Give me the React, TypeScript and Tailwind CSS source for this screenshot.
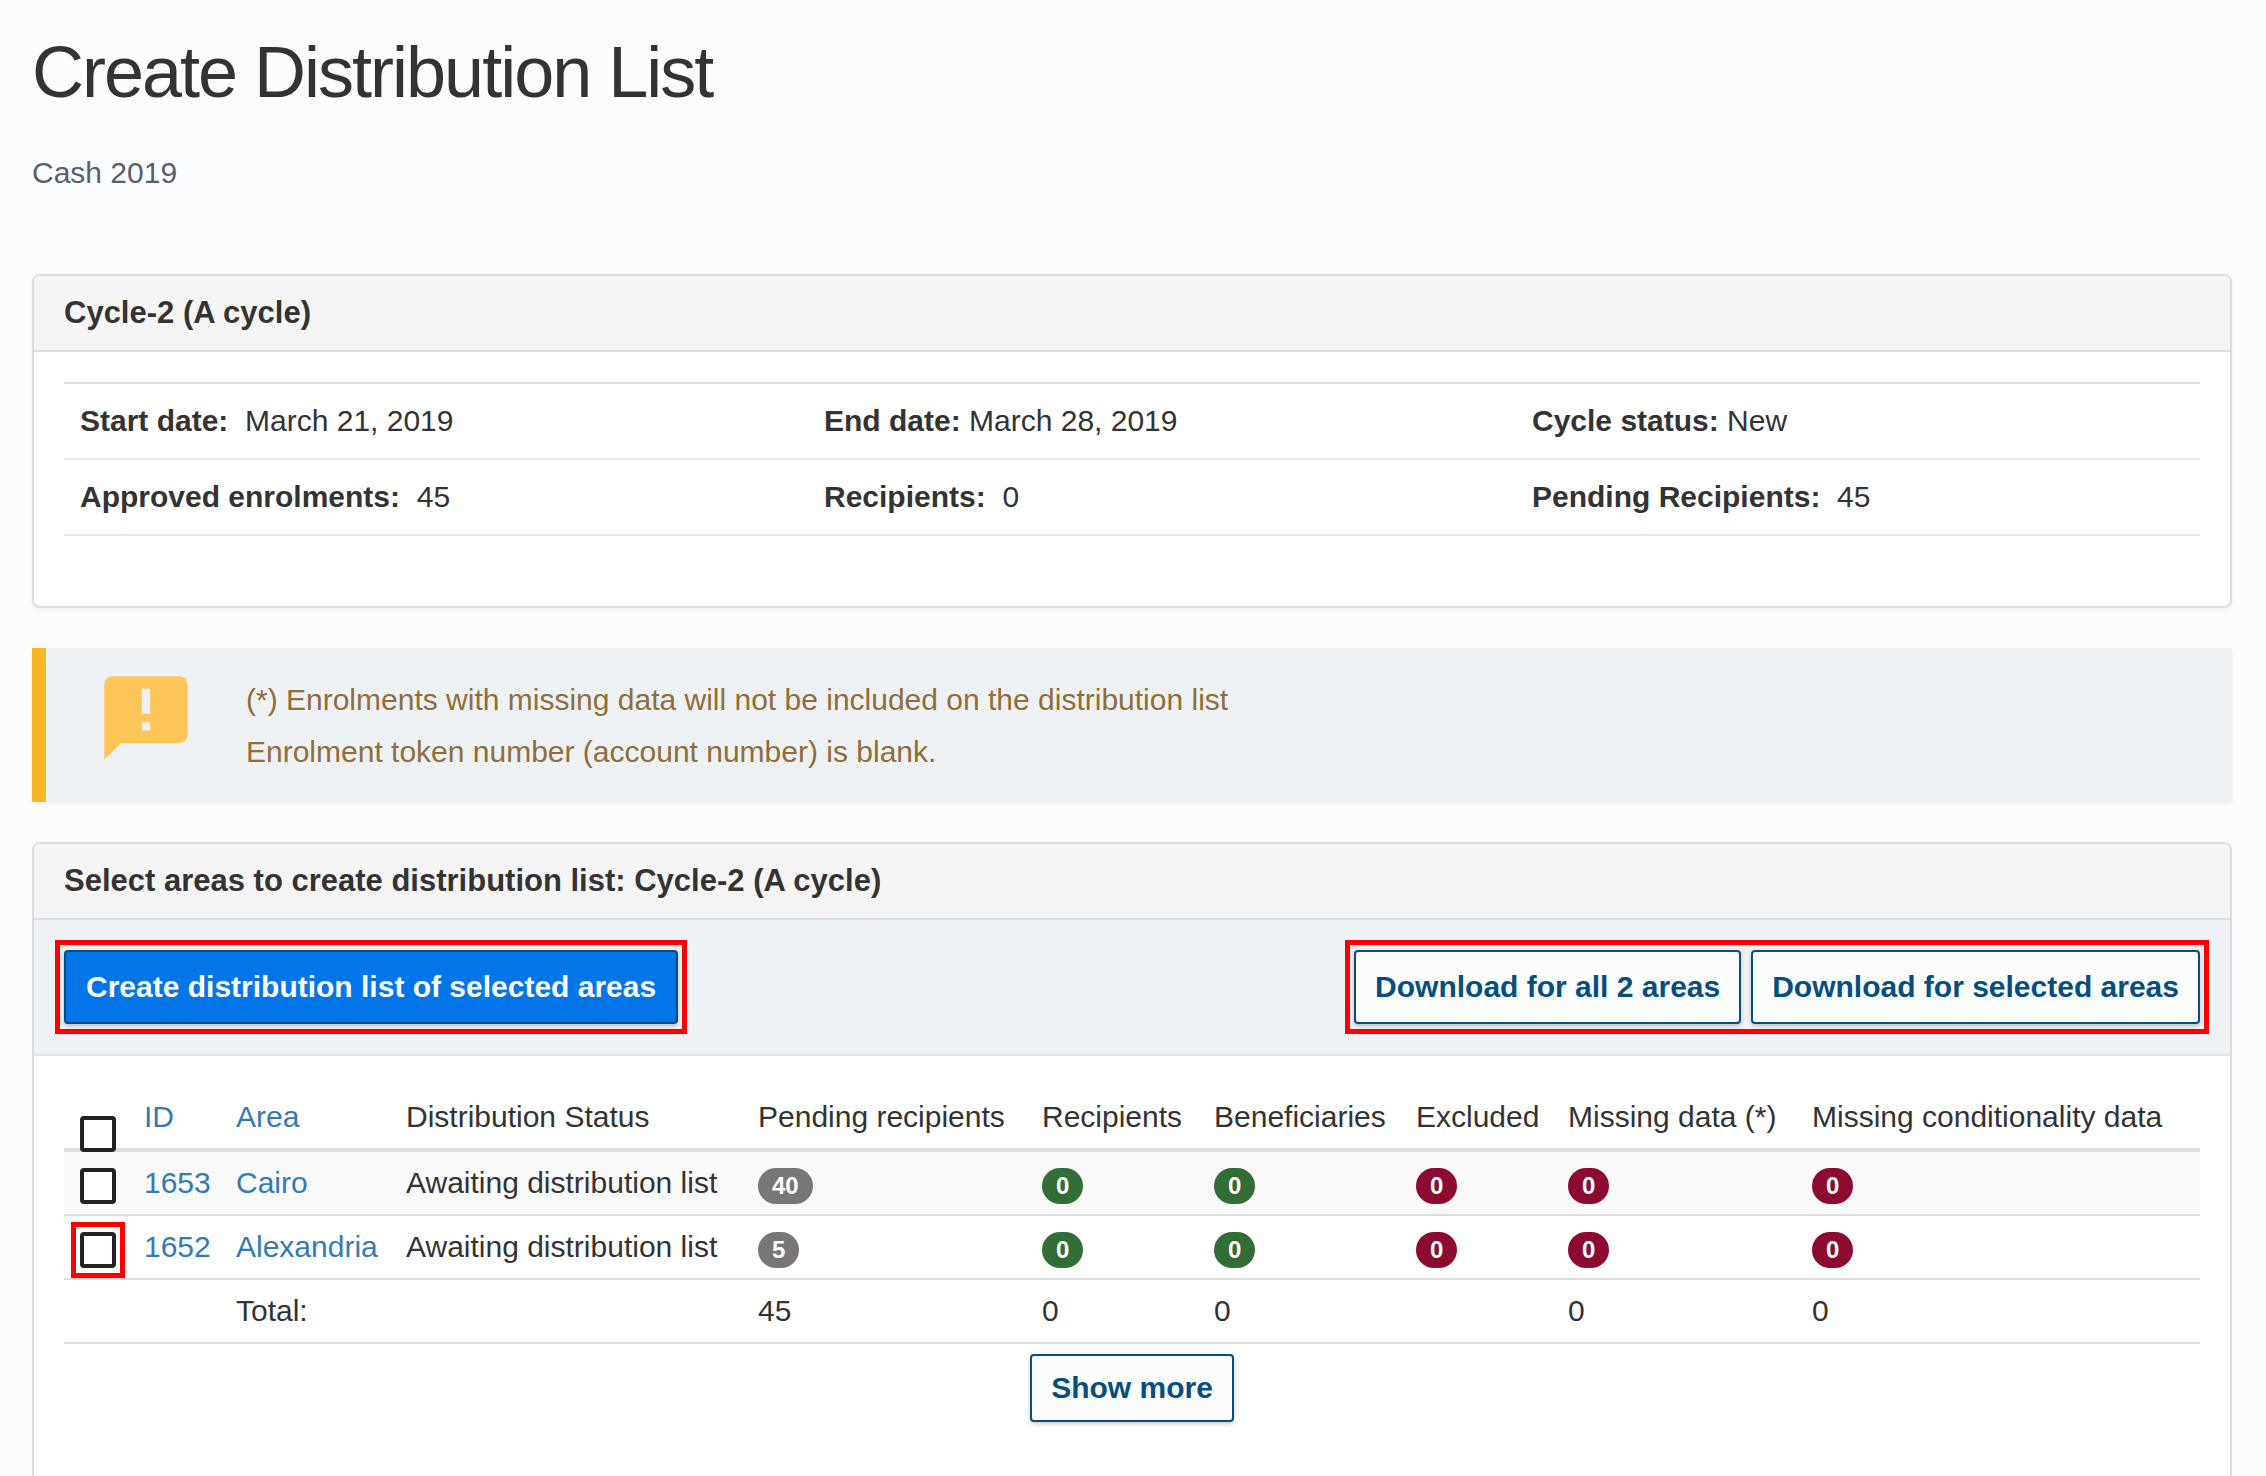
import { useState } from 'react';
import type { ReactNode } from 'react';

interface AreaRow {
  id: number;
  name: string;
  status: string;
  pending: number;
  recipients: number;
  beneficiaries: number;
  excluded: number;
  missingData: number;
  missingConditionality: number;
  marked?: boolean;
}

const areas: AreaRow[] = [
  {
    id: 1653,
    name: 'Cairo',
    status: 'Awaiting distribution list',
    pending: 40,
    recipients: 0,
    beneficiaries: 0,
    excluded: 0,
    missingData: 0,
    missingConditionality: 0,
  },
  {
    id: 1652,
    name: 'Alexandria',
    status: 'Awaiting distribution list',
    pending: 5,
    recipients: 0,
    beneficiaries: 0,
    excluded: 0,
    missingData: 0,
    missingConditionality: 0,
    marked: true,
  },
];

const badgeColors = {
  gray: 'bg-[#777777]',
  green: 'bg-[#336d36]',
  red: 'bg-[#8c0a2f]',
};

function Badge({ color, children }: { color: keyof typeof badgeColors; children: ReactNode }) {
  return (
    <span className={`mt-1.5 block w-fit rounded-full px-3.5 text-2xl leading-9 font-bold text-white ${badgeColors[color]}`}>
      {children}
    </span>
  );
}

function Checkbox({ label, checked, onChange }: { label: string; checked: boolean; onChange: () => void }) {
  return (
    <input
      type="checkbox"
      aria-label={label}
      checked={checked}
      onChange={onChange}
      className="block size-9 cursor-pointer appearance-none rounded-sm border-4 border-[#222222] bg-white checked:bg-[#0275e8]"
    />
  );
}

// Red frame that points at the controls the user has to click
function Highlight() {
  return <span className="pointer-events-none absolute -inset-x-[9px] -inset-y-[10px] border-5 border-[#ff0000]" />;
}

function Button({ children, primary, className = '' }: { children: ReactNode; primary?: boolean; className?: string }) {
  const colors = primary ? 'bg-[#0275e8] px-5 text-white' : 'bg-[#fbfdfd] px-[19px] text-[#074e80]';
  return (
    <button
      type="button"
      className={`cursor-pointer rounded-sm border-2 border-[#074e80] font-bold whitespace-nowrap shadow-[0_2px_4px_rgba(0,0,0,0.2)] ${colors} ${className}`}
    >
      {children}
    </button>
  );
}

function PanelHeader({ children }: { children: ReactNode }) {
  return (
    <h2 className="rounded-t-md border-b-2 border-[#dddddd] bg-[#f5f5f5] px-[30px] py-4 text-[31px] leading-[42px] font-bold">
      {children}
    </h2>
  );
}

export default function App() {
  const [selected, setSelected] = useState<number[]>([]);
  const allSelected = selected.length === areas.length;

  const toggle = (id: number) => {
    setSelected((prev) => (prev.includes(id) ? prev.filter((x) => x !== id) : [...prev, id]));
  };

  return (
    <div className="flex min-h-screen flex-col bg-[#fbfcfe] pt-8 pr-[34px] pl-8 font-['Liberation_Sans',Arial,sans-serif] text-[30px] leading-[42px] text-[#333333]">
      <h1 className="text-7xl leading-[80px] tracking-[-2px]">Create Distribution List</h1>
      <p className="mt-10 text-[#586069]">Cash 2019</p>

      {/* Cycle summary */}
      <section className="mt-20 rounded-lg border-2 border-[#dddddd] bg-white shadow-[0_2px_4px_rgba(0,0,0,0.05)]">
        <PanelHeader>Cycle-2 (A cycle)</PanelHeader>
        <div className="px-[30px] pt-[30px] pb-[70px]">
          <table className="w-full table-fixed border-separate border-spacing-0 border-t-2 border-[#dddddd]">
            <colgroup>
              <col className="w-[744px]" />
              <col className="w-[708px]" />
              <col />
            </colgroup>
            <tbody className="[&_td]:border-b-2 [&_td]:border-[#e7e7e7] [&_td]:px-4 [&_td]:py-4">
              <tr>
                <td><b>Start date:</b>&nbsp; March 21, 2019</td>
                <td><b>End date:</b> March 28, 2019</td>
                <td><b>Cycle status:</b> New</td>
              </tr>
              <tr>
                <td><b>Approved enrolments:</b>&nbsp; 45</td>
                <td><b>Recipients:</b>&nbsp; 0</td>
                <td><b>Pending Recipients:</b>&nbsp; 45</td>
              </tr>
            </tbody>
          </table>
        </div>
      </section>

      {/* Missing data warning */}
      <div
        role="alert"
        className="mt-10 flex border-l-14 border-[#f8b826] bg-[#eef2f5] pt-5 pb-6 pl-[50px] text-[#8f6e38] shadow-[0_2px_4px_rgba(0,0,0,0.06)]"
      >
        <svg viewBox="0 0 24 24" className="size-[100px] shrink-0" fill="#ffc559" aria-hidden="true">
          <path d="M13 11h-2V5h2m0 10h-2v-2h2m7-11H4a2 2 0 0 0-2 2v18l4-4h14a2 2 0 0 0 2-2V4a2 2 0 0 0-2-2z" />
        </svg>
        <div className="pt-1.5 pl-[50px] leading-[52px]">
          <p>(*) Enrolments with missing data will not be included on the distribution list</p>
          <p>Enrolment token number (account number) is blank.</p>
        </div>
      </div>

      {/* Area selection */}
      <section className="mt-10 flex-1 rounded-t-lg border-2 border-b-0 border-[#dddddd] bg-white">
        <PanelHeader>Select areas to create distribution list: Cycle-2 (A cycle)</PanelHeader>

        <div className="flex justify-between border-b-2 border-[#dfe5ea] bg-[#eef2f5] p-[30px]">
          <div className="relative">
            <Button primary className="py-3.5">Create distribution list of selected areas</Button>
            <Highlight />
          </div>
          <div className="relative flex gap-2.5">
            <Button className="py-3.5">Download for all 2 areas</Button>
            <Button className="py-3.5">Download for selected areas</Button>
            <Highlight />
          </div>
        </div>

        <div className="px-[30px] pt-[30px]">
          <table className="w-full table-fixed border-separate border-spacing-0 text-left">
            <colgroup>
              <col className="w-[68px]" />
              <col className="w-[92px]" />
              <col className="w-[170px]" />
              <col className="w-[352px]" />
              <col className="w-[284px]" />
              <col className="w-[172px]" />
              <col className="w-[202px]" />
              <col className="w-[152px]" />
              <col className="w-[244px]" />
              <col />
            </colgroup>
            <thead className="[&_th]:border-b-4 [&_th]:border-[#dddddd] [&_th]:px-3 [&_th]:py-2.5 [&_th]:align-top [&_th]:font-normal [&_th]:whitespace-nowrap">
              <tr>
                <th>
                  <div className="mt-5 -mb-3.5 ml-1">
                    <Checkbox
                      label="Select all areas"
                      checked={allSelected}
                      onChange={() => setSelected(allSelected ? [] : areas.map((a) => a.id))}
                    />
                  </div>
                </th>
                <th><a href="#id" className="text-[#337ab7]">ID</a></th>
                <th><a href="#area" className="text-[#337ab7]">Area</a></th>
                <th>Distribution Status</th>
                <th>Pending recipients</th>
                <th>Recipients</th>
                <th>Beneficiaries</th>
                <th>Excluded</th>
                <th>Missing data (*)</th>
                <th>Missing conditionality data</th>
              </tr>
            </thead>
            <tbody className="[&_td]:h-16 [&_td]:border-b-2 [&_td]:border-[#dddddd] [&_td]:px-3 [&_td]:py-2.5 [&_td]:align-top">
              {areas.map((area) => (
                <tr key={area.id} className="odd:bg-[#f9f9f9]">
                  <td>
                    <div className="relative mt-1.5 ml-1 w-fit">
                      <Checkbox
                        label={`Select ${area.name}`}
                        checked={selected.includes(area.id)}
                        onChange={() => toggle(area.id)}
                      />
                      {area.marked && <Highlight />}
                    </div>
                  </td>
                  <td><a href={`#${area.id}`} className="text-[#337ab7]">{area.id}</a></td>
                  <td><a href={`#${area.id}`} className="text-[#337ab7]">{area.name}</a></td>
                  <td>{area.status}</td>
                  <td><Badge color="gray">{area.pending}</Badge></td>
                  <td><Badge color="green">{area.recipients}</Badge></td>
                  <td><Badge color="green">{area.beneficiaries}</Badge></td>
                  <td><Badge color="red">{area.excluded}</Badge></td>
                  <td><Badge color="red">{area.missingData}</Badge></td>
                  <td><Badge color="red">{area.missingConditionality}</Badge></td>
                </tr>
              ))}
              <tr>
                <td />
                <td />
                <td>Total:</td>
                <td />
                <td>45</td>
                <td>0</td>
                <td>0</td>
                <td />
                <td>0</td>
                <td>0</td>
              </tr>
            </tbody>
          </table>

          <div className="mt-2.5 flex justify-center">
            <Button className="py-[11px]">Show more</Button>
          </div>
        </div>
      </section>
    </div>
  );
}
